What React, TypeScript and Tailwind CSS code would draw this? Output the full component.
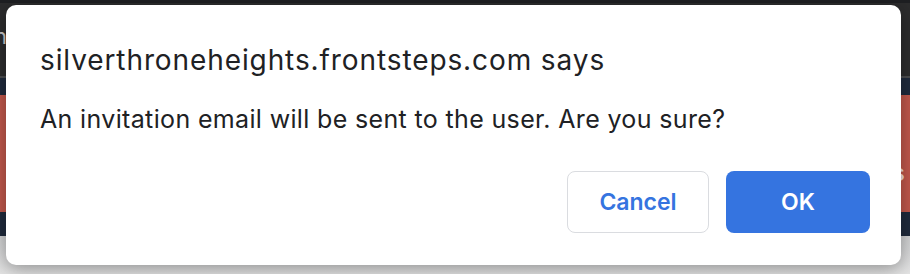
export default function App() {
  return (
    <div className="relative w-[910px] h-[274px] overflow-hidden bg-[#d9dadb] font-['Inter','Liberation_Sans',sans-serif]">
      {/* page behind the dialog */}
      <div className="h-[3px] bg-[#1e1f22]" />
      <div className="flex h-[73px] items-center bg-[#2c2c2d] pb-[6px]">
        <span className="ml-[-6px] text-[22px] text-[#c9c9c9]">nc</span>
      </div>
      <div className="h-[2px] bg-[#4b4c4e]" />
      <div className="flex h-[158px] flex-col bg-[#1f2a3c] pt-[17px]">
        <div className="flex h-[117px] items-start justify-end bg-[#c0574b] pt-[66px] pr-[5px] text-[24px] leading-[24px] font-medium text-[#f3dcd9]">
          Actions
        </div>
      </div>
      <div className="h-[38px] bg-gradient-to-b from-[#cfd0d1] to-[#e4e4e4]" />

      {/* alert dialog */}
      <div className="absolute left-[6px] top-[5px] flex w-[895px] flex-col rounded-[10px] bg-white px-[34px] pt-[39px] pb-[32px] text-[#202124] shadow-[0_4px_18px_rgba(0,0,0,0.35)]">
        <h1 className="text-[28px] leading-[32px] font-normal tracking-[0.9px]">
          silverthroneheights.frontsteps.com says
        </h1>
        <p className="mt-[28px] text-[25px] leading-[30px] tracking-[0.35px]">
          An invitation email will be sent to the user. Are you sure?
        </p>
        <div className="mt-[37px] flex justify-end gap-[17px]">
          <button className="h-[62px] w-[142px] rounded-[8px] border border-[#dadce0] bg-white text-[23px] font-semibold text-[#3574e0]">
            Cancel
          </button>
          <button className="mr-[-3px] h-[62px] w-[144px] rounded-[8px] bg-[#3574e0] text-[23px] font-semibold text-white">
            OK
          </button>
        </div>
      </div>
    </div>
  );
}
